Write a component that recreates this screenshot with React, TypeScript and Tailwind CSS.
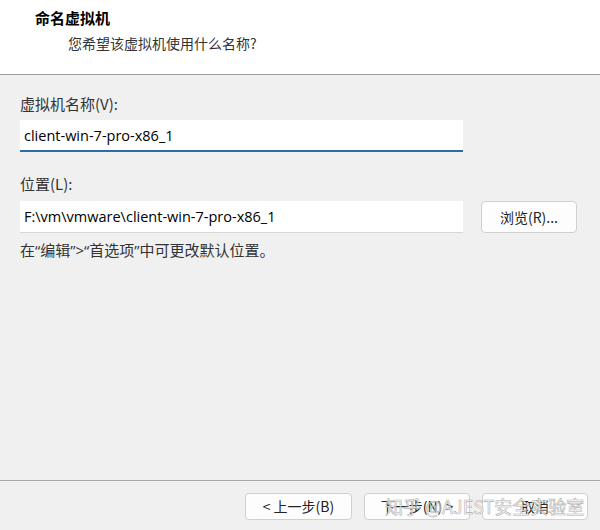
export default function App() {
  const cjk = { fontFamily: '"Noto Sans CJK SC", "Noto Sans", sans-serif' }
  const latin = { fontFamily: '"Open Sans", "Noto Sans CJK SC", sans-serif' }

  return (
    <div className="relative flex h-[530px] w-[600px] flex-col overflow-hidden bg-[#f0f0f0] text-[#1a1a1a]" style={cjk}>
      {/* header */}
      <div className="h-[75px] shrink-0 border-b border-[#a0a0a0] bg-white">
        <div className="pl-[35px] pt-[7px] text-[15px] font-bold leading-[22px] text-black">命名虚拟机</div>
        <div className="pl-[68px] pt-[3px] text-[14px] leading-[22px] text-[#333]">您希望该虚拟机使用什么名称?</div>
      </div>

      {/* body */}
      <div className="flex flex-1 flex-col px-[20px] pt-[18px]">
        <div className="text-[15px] leading-[22px] text-[#333]">虚拟机名称(V):</div>
        <div className="mt-[5px] flex h-[32px] w-[443px] items-center border-b-2 border-[#2c6ea2] bg-white pl-[4px] pt-[1px] text-[14.5px] text-black" style={latin}>
          client-win-7-pro-x86_1
        </div>

        <div className="mt-[21px] text-[15px] leading-[22px] text-[#333]">位置(L):</div>
        <div className="mt-[6px] flex items-center">
          <div className="flex h-[32px] w-[443px] items-center border-b border-[#d8d8d8] bg-white pl-[4px] text-[14.5px] text-black" style={latin}>
            F:\vm\vmware\client-win-7-pro-x86_1
          </div>
          <button className="ml-[18px] flex h-[32px] w-[96px] items-center justify-center rounded-[4px] border border-[#d0d0d0] bg-[#fdfdfd] text-[14px] text-[#222]">
            浏览(R)...
          </button>
        </div>
        <div className="mt-[6px] text-[15px] leading-[22px] text-[#333]">
          在<span style={latin}>“</span>编辑<span style={latin}>”&gt;“</span>首选项<span style={latin}>”</span>中可更改默认位置。
        </div>
      </div>

      {/* footer */}
      <div className="flex h-[50px] shrink-0 items-start justify-end gap-[12px] border-t border-[#a8a8a8] pr-[12px] pt-[12px]">
        <button className="flex h-[27px] w-[107px] items-center justify-center rounded-[4px] border border-[#d0d0d0] bg-[#fdfdfd] text-[14px] text-[#222]">
          &lt; 上一步(B)
        </button>
        <button className="flex h-[27px] w-[106px] items-center justify-center rounded-[4px] border border-[#d0d0d0] bg-[#fdfdfd] text-[14px] text-[#222]">
          下一步(N) &gt;
        </button>
        <button className="flex h-[27px] w-[106px] items-center justify-center rounded-[4px] border border-[#d0d0d0] bg-[#fdfdfd] text-[14px] text-[#222]">
          取消
        </button>
      </div>

      {/* watermark */}
      <div
        className="pointer-events-none absolute left-[385px] top-[494px] text-[18px] leading-[24px] text-white opacity-80"
        style={{ ...cjk, WebkitTextStroke: '0.6px #a0a0a0' }}
      >
        知乎 @AJEST安全实验室
      </div>
    </div>
  )
}
